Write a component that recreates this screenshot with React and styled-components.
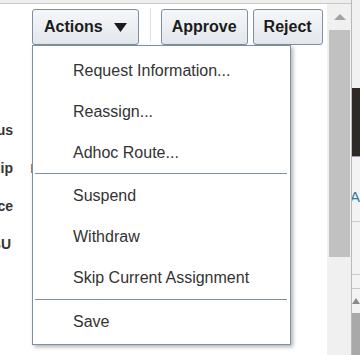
import React from "react";
import styled, { createGlobalStyle } from "styled-components";

const Global = createGlobalStyle`
  html, body { margin: 0; padding: 0; }
  body {
    width: 360px; height: 355px; overflow: hidden; background: #ffffff;
    font-family: "Liberation Sans", Arial, sans-serif;
  }
`;

const Screen = styled.div`
  display: flex;
  width: 360px;
  height: 355px;
  overflow: hidden;
`;

const LeftArea = styled.div`
  flex: 0 0 351px;
  display: flex;
  flex-direction: column;
`;

const TopStrip = styled.div`
  height: 3px;
  background: #eeeeee;
  border-bottom: 1px solid #c9c9c9;
`;

const Body = styled.div`
  flex: 1;
  display: flex;
  min-height: 0;
`;

const Main = styled.div`
  flex: 0 0 327px;
  display: flex;
  flex-direction: column;
  background: #ffffff;
`;

const Toolbar = styled.div`
  display: flex;
  align-items: center;
  padding: 5px 0 0 32px;
  height: 36px;
`;

const Button = styled.button`
  box-sizing: border-box;
  height: 36px;
  display: flex;
  align-items: center;
  gap: 11px;
  padding: 0 ${(p) => p.$pad || 10}px;
  margin-left: ${(p) => p.$ml || 0}px;
  border: 1px solid #7d90a5;
  border-radius: 3px;
  background: linear-gradient(#f5f7f9, #e3e7eb);
  font-family: "Liberation Sans", Arial, sans-serif;
  font-weight: bold;
  font-size: 16px;
  color: #1b1b1b;
  cursor: pointer;
`;

const ActionsWrap = styled.div`
  position: relative;
  display: flex;
`;

const VSep = styled.div`
  width: 1px;
  height: 34px;
  margin: 0 10px 0 11px;
  background: #dde2e7;
  align-self: flex-start;
  margin-top: -1px;
`;

const Menu = styled.div`
  position: absolute;
  top: 100%;
  left: 0;
  z-index: 5;
  box-sizing: border-box;
  width: 259px;
  height: 300px;
  padding-top: 4px;
  background: #ffffff;
  border: 1px solid #7b90a6;
  box-shadow: 2px 2px 4px rgba(0, 0, 0, 0.3);
  display: flex;
  flex-direction: column;
`;

const Item = styled.div`
  height: 41px;
  line-height: 41px;
  padding-left: 40px;
  font-size: 16px;
  color: #333333;
  white-space: nowrap;
`;

const MenuSep = styled.div`
  height: 1px;
  margin: ${(p) => p.$mt || 0}px 3px 1px 2px;
  background: #7b90a6;
`;

const Rows = styled.div`
  margin-top: 66px;
  display: flex;
  flex-direction: column;
`;

const Row = styled.div`
  height: 38px;
  display: flex;
  align-items: center;
`;

const LabelCell = styled.div`
  flex: 0 0 ${(p) => p.$w || 13}px;
  display: flex;
  justify-content: flex-end;
  overflow: hidden;
  white-space: nowrap;
  font-size: 14px;
  font-weight: bold;
  color: #333333;
`;

const ValueCell = styled.div`
  margin-left: ${(p) => 30 - (p.$w || 13)}px;
  font-size: 13px;
  color: #666666;
  white-space: nowrap;
`;

const Scrollbar = styled.div`
  flex: 0 0 24px;
  display: flex;
  flex-direction: column;
  background: #f0f0f0;
`;

const ArrowBox = styled.div`
  height: 26px;
  display: flex;
  align-items: center;
  justify-content: center;
  padding-left: 1px;
`;

const Thumb = styled.div`
  height: 227px;
  margin-left: 2px;
  width: 21px;
  background: #c1c1c1;
`;

const RightPanel = styled.div`
  flex: 0 0 8px;
  border-left: 1px solid #b9b9b9;
  display: flex;
  flex-direction: column;
  background: #f3f3f3;
  overflow: hidden;
`;

const RpTop = styled.div`
  height: 88px;
  background: #f1f1f1;
`;

const RpDark = styled.div`
  height: 68px;
  background: #2d2926;
  border-bottom: 1px solid #8fa3b5;
`;

const RpText = styled.div`
  margin-top: 30px;
  margin-left: -2px;
  height: 20px;
  line-height: 20px;
  font-size: 15px;
  color: #2b7c9e;
  white-space: nowrap;
`;

const RpLine = styled.div`
  height: 1px;
  background: #c9c9c9;
  margin-top: ${(p) => p.$mt}px;
`;

const RpArrow = styled.div`
  margin-top: 8px;
  height: 8px;
  display: flex;
  align-items: center;
`;

const RpThumb = styled.div`
  margin-top: 8px;
  flex: 1;
  background: #a9a9a9;
`;

const Caret = () => (
  <svg width="13" height="9" viewBox="0 0 13 9">
    <polygon points="0,0 13,0 6.5,9" fill="#1b1b1b" />
  </svg>
);

const UpArrow = ({ color = "#a3a3a3", w = 12, h = 6 }) => (
  <svg width={w} height={h} viewBox={`0 0 ${w} ${h}`}>
    <polygon points={`0,${h} ${w},${h} ${w / 2},0`} fill={color} />
  </svg>
);

const rows = [
  { label: "Status" },
  { label: "Ownership", value: "Individual" },
  { label: "Source" },
  { label: "BU", w: 11 },
];

export default function App() {
  return (
    <>
      <Global />
      <Screen>
        <LeftArea>
          <TopStrip />
          <Body>
            <Main>
              <Toolbar>
                <ActionsWrap>
                  <Button $pad={11}>
                    Actions
                    <Caret />
                  </Button>
                  <Menu>
                    <Item>Request Information...</Item>
                    <Item>Reassign...</Item>
                    <Item>Adhoc Route...</Item>
                    <MenuSep />
                    <Item>Suspend</Item>
                    <Item>Withdraw</Item>
                    <Item>Skip Current Assignment</Item>
                    <MenuSep $mt={1} />
                    <Item>Save</Item>
                  </Menu>
                </ActionsWrap>
                <VSep />
                <Button>Approve</Button>
                <Button $ml={5}>Reject</Button>
              </Toolbar>
              <Rows>
                {rows.map((r) => (
                  <Row key={r.label}>
                    <LabelCell $w={r.w}>{r.label}</LabelCell>
                    {r.value && <ValueCell $w={r.w}>{r.value}</ValueCell>}
                  </Row>
                ))}
              </Rows>
            </Main>
            <Scrollbar>
              <ArrowBox>
                <UpArrow />
              </ArrowBox>
              <Thumb />
            </Scrollbar>
          </Body>
        </LeftArea>
        <RightPanel>
          <RpTop />
          <RpDark />
          <RpText>Al</RpText>
          <RpLine $mt={14} />
          <RpLine $mt={52} />
          <RpLine $mt={13} />
          <RpArrow>
            <UpArrow color="#8a8a8a" w={8} h={6} />
          </RpArrow>
          <RpThumb />
        </RightPanel>
      </Screen>
    </>
  );
}
